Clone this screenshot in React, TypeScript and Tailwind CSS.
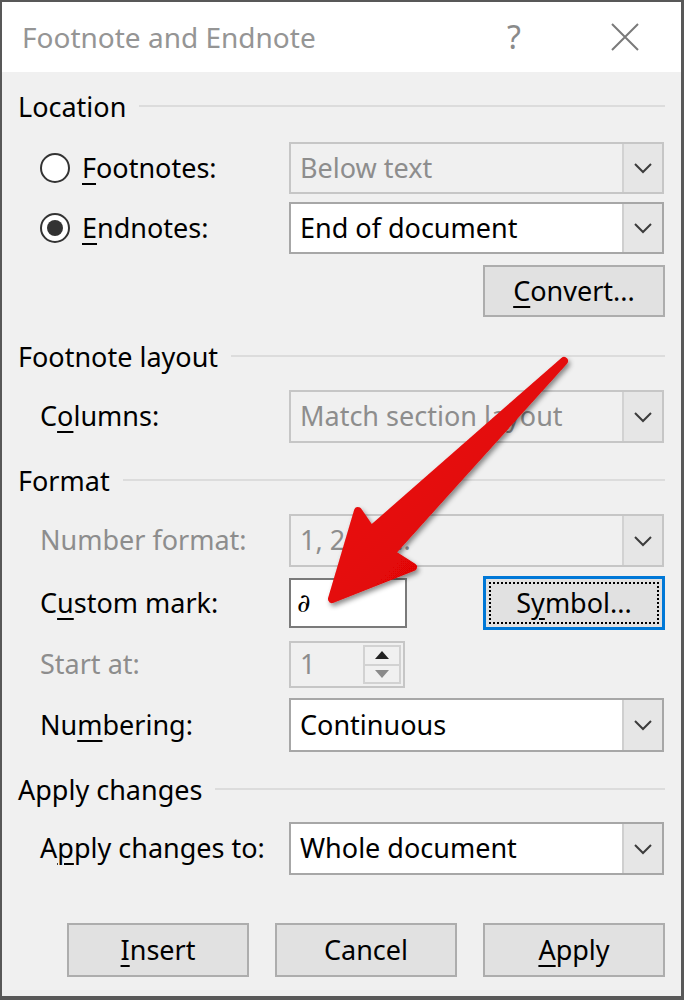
import React from "react";

const FONT = { fontFamily: '"Noto Sans", "Open Sans", Arial, sans-serif' };

function U({ children }: { children: React.ReactNode }) {
  return <span className="underline decoration-2 underline-offset-[5px]">{children}</span>;
}

function Chevron() {
  return (
    <svg width="20" height="12" viewBox="0 0 20 12">
      <path d="M2 2 L10 10 L18 2" fill="none" stroke="#3c3c3c" strokeWidth="2" />
    </svg>
  );
}

function Combo({ text, disabled }: { text: string; disabled?: boolean }) {
  return (
    <div
      className={
        "flex h-full w-[375px] border-2 " +
        (disabled ? "border-[#c6c6c6] bg-[#f0f0f0]" : "border-[#a7a7a7] bg-white")
      }
    >
      <div
        className={
          "flex flex-1 items-center whitespace-nowrap pl-[9px] text-[27px] " +
          (disabled ? "text-[#8d8d8d]" : "text-black")
        }
      >
        {text}
      </div>
      <div
        className={
          "flex w-[40px] items-center justify-center border-l-2 " +
          (disabled ? "border-[#d2d2d2] bg-[#e6e6e6]" : "border-[#cfcfcf] bg-[#e6e6e6]")
        }
      >
        <Chevron />
      </div>
    </div>
  );
}

function Heading({ children }: { children: React.ReactNode }) {
  return (
    <div className="flex h-[30px] items-center">
      <span className="text-[27px] leading-[30px] text-black">{children}</span>
      <div className="ml-[13px] mt-[-2px] h-[2px] flex-1 bg-[#dcdcdc]" />
    </div>
  );
}

function Btn({ children, w = "w-[182px]" }: { children: React.ReactNode; w?: string }) {
  return (
    <div
      className={
        "flex h-full items-center justify-center border-2 border-[#adadad] bg-[#e1e1e1] text-[27px] text-black " +
        w
      }
    >
      {children}
    </div>
  );
}

function Radio({ checked }: { checked?: boolean }) {
  return (
    <div className="flex h-[30px] w-[30px] items-center justify-center rounded-full border-2 border-[#333] bg-white">
      {checked && <div className="h-[16px] w-[16px] rounded-full bg-[#333]" />}
    </div>
  );
}

export default function App() {
  return (
    <div className="relative h-[1000px] w-[684px] bg-white" style={FONT}>
      <div className="flex h-[1000px] w-[684px] flex-col border-b-[4px] border-l-2 border-r-[3px] border-t-2 border-[#585858]">
        {/* Title bar */}
        <div className="flex h-[70px] shrink-0 items-center bg-white pl-[20px]">
          <span className="text-[28px] text-[#959595]">Footnote and Endnote</span>
          <div className="ml-auto mr-[42px] flex items-center gap-[90px]">
            <span className="text-[32px] leading-none text-[#8a8a8a]">?</span>
            <svg width="28" height="28" viewBox="0 0 28 28">
              <path d="M1 1 L27 27 M27 1 L1 27" stroke="#7a7a7a" strokeWidth="2" />
            </svg>
          </div>
        </div>

        {/* Body */}
        <div className="flex flex-1 flex-col bg-[#f0f0f0] pl-[16px] pr-[16px] pt-[20px]">
          <Heading>Location</Heading>

          <div className="mt-[20px] flex h-[52px] items-center pl-[22px]">
            <div className="flex w-[249px] items-center">
              <Radio />
              <span className="ml-[12px] text-[27px] text-black">
                <U>F</U>ootnotes:
              </span>
            </div>
            <Combo text="Below text" disabled />
          </div>

          <div className="mt-[8px] flex h-[52px] items-center pl-[22px]">
            <div className="flex w-[249px] items-center">
              <Radio checked />
              <span className="ml-[12px] text-[27px] text-black">
                <U>E</U>ndnotes:
              </span>
            </div>
            <Combo text="End of document" />
          </div>

          <div className="mt-[11px] flex h-[52px] justify-end">
            <Btn>
              <span>
                <U>C</U>onvert...
              </span>
            </Btn>
          </div>

          <div className="mt-[25px]">
            <Heading>Footnote layout</Heading>
          </div>

          <div className="mt-[18px] flex h-[53px] items-center pl-[22px]">
            <div className="w-[249px] text-[27px] text-black">
              C<U>o</U>lumns:
            </div>
            <Combo text="Match section layout" disabled />
          </div>

          <div className="mt-[23px]">
            <Heading>Format</Heading>
          </div>

          <div className="mt-[18px] flex h-[53px] items-center pl-[22px]">
            <div className="w-[249px] text-[27px] text-[#8d8d8d]">Number format:</div>
            <Combo text="1, 2, 3, ..." disabled />
          </div>

          <div className="mt-[9px] flex h-[54px] items-center pl-[22px]">
            <div className="w-[249px] text-[27px] text-black">
              C<U>u</U>stom mark:
            </div>
            <div className="flex h-[50px] w-[118px] items-center border-2 border-[#7a7a7a] bg-white pl-[6px]">
              <span className="text-[26px] italic text-black" style={{ fontFamily: '"DejaVu Serif", serif' }}>
                ∂
              </span>
            </div>
            <div className="ml-auto flex h-full w-[182px] border-[3px] border-[#0078d7] bg-[#e1e1e1] p-[3px]">
              <div className="flex flex-1 items-center justify-center border-2 border-dotted border-black text-[27px] text-black">
                <span>
                  S<U>y</U>mbol...
                </span>
              </div>
            </div>
          </div>

          <div className="mt-[11px] flex h-[47px] items-center pl-[22px]">
            <div className="w-[249px] text-[27px] text-[#8d8d8d]">Start at:</div>
            <div className="flex h-full w-[116px] border-2 border-[#c6c6c6] bg-[#f0f0f0]">
              <div className="flex flex-1 items-center pl-[9px] text-[27px] text-[#8d8d8d]">1</div>
              <div className="my-[2px] mr-[2px] flex w-[38px] flex-col border-2 border-[#d2d2d2]">
                <div className="flex flex-1 items-center justify-center border-b-2 border-[#d2d2d2]">
                  <svg width="14" height="8" viewBox="0 0 14 8">
                    <path d="M0 8 L7 0 L14 8 Z" fill="#222" />
                  </svg>
                </div>
                <div className="flex flex-1 items-center justify-center">
                  <svg width="14" height="8" viewBox="0 0 14 8">
                    <path d="M0 0 L7 8 L14 0 Z" fill="#8a8a8a" />
                  </svg>
                </div>
              </div>
            </div>
          </div>

          <div className="mt-[10px] flex h-[54px] items-center pl-[22px]">
            <div className="w-[249px] text-[27px] text-black">
              Nu<U>m</U>bering:
            </div>
            <Combo text="Continuous" />
          </div>

          <div className="mt-[23px]">
            <Heading>Apply changes</Heading>
          </div>

          <div className="mt-[17px] flex h-[53px] items-center pl-[22px]">
            <div className="w-[249px] whitespace-nowrap text-[27px] text-black">
              A<U>p</U>ply changes to:
            </div>
            <Combo text="Whole document" />
          </div>

          <div className="mt-[48px] flex h-[54px] justify-end gap-[26px]">
            <Btn>
              <span>
                <U>I</U>nsert
              </span>
            </Btn>
            <Btn>Cancel</Btn>
            <Btn>
              <span>
                <U>A</U>pply
              </span>
            </Btn>
          </div>
        </div>
      </div>

      {/* Red arrow overlay */}
      <svg className="pointer-events-none absolute inset-0" width="684" height="1000" viewBox="0 0 684 1000">
        <defs>
          <linearGradient id="ag" x1="0" y1="0" x2="1" y2="1">
            <stop offset="0" stopColor="#f01010" />
            <stop offset="1" stopColor="#d80000" />
          </linearGradient>
          <filter id="sh" x="-20%" y="-20%" width="140%" height="140%">
            <feDropShadow dx="2" dy="3" stdDeviation="2.5" floodColor="#000" floodOpacity="0.45" />
          </filter>
        </defs>
        <path
          d="M564 361 L391 553 L413 567 L332 599 L358 511 L371 530 Z"
          fill="url(#ag)"
          stroke="url(#ag)"
          strokeWidth="8"
          strokeLinejoin="round"
          filter="url(#sh)"
        />
      </svg>
    </div>
  );
}
